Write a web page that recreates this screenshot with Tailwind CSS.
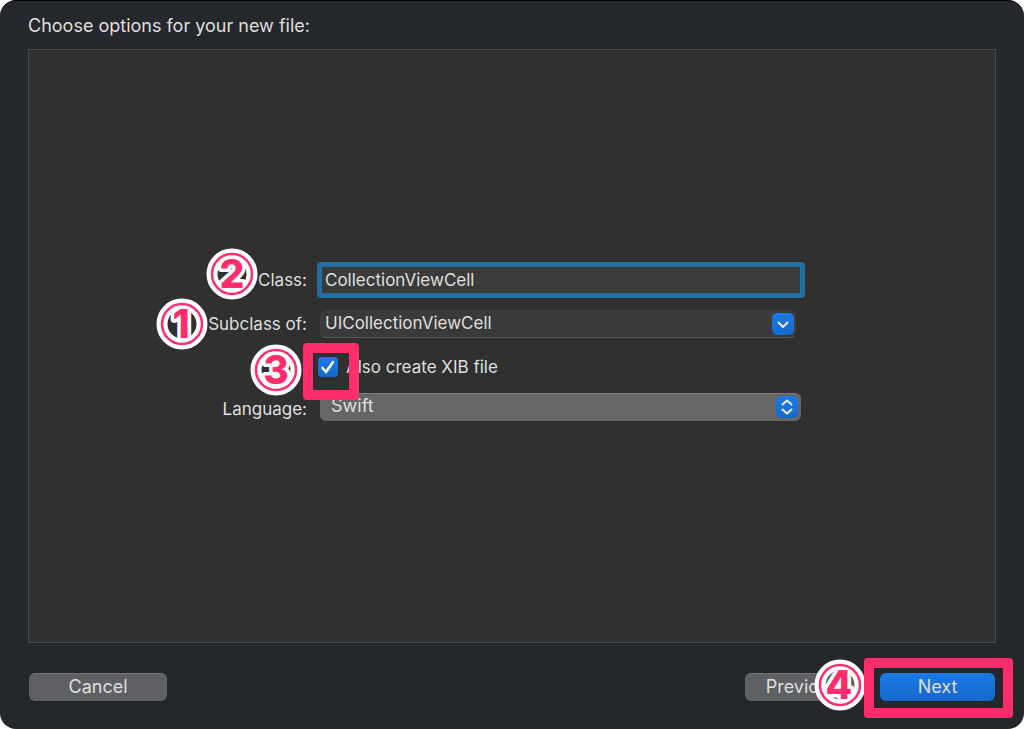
<!DOCTYPE html>
<html lang="en" class="h-full">
<head>
<meta charset="utf-8">
<title>Choose options for your new file</title>
<script src="https://cdn.jsdelivr.net/npm/@tailwindcss/browser@4"></script>
</head>
<body class="min-h-full h-full bg-white font-[Inter,sans-serif] text-[17px] leading-6 text-[#dfdfdf]">
<svg class="hidden">
  <symbol id="halo" viewBox="0 0 52 52">
    <circle cx="26" cy="26" r="20" fill="none" stroke="#fff" stroke-width="11"/>
  </symbol>
  <symbol id="ring" viewBox="0 0 52 52">
    <circle cx="26" cy="26" r="20" fill="none" stroke="#ff2d6c" stroke-width="2.5"/>
  </symbol>
</svg>
<main class="flex h-full min-h-full flex-col rounded-2xl border-t border-black bg-[#24272b] px-7 pt-[13px] pb-7">
  <h1 class="mb-[11px] text-lg leading-6">Choose options for your new file:</h1>
  <form id="options" class="flex flex-1 flex-col justify-center border border-[#464748] bg-[#303030] pb-[9px]">
    <div class="grid grid-cols-[278fr_488fr_180fr] gap-x-[10px]">
      <div class="relative flex items-center justify-end">
        <label for="cls">Class:</label>
        <svg class="absolute -top-[14px] right-[49px] size-[52px]" viewBox="0 0 52 52" aria-hidden="true"><use href="#halo"/><text x="26" y="40" text-anchor="middle" font-family="Inter" font-weight="800" font-size="39" fill="#ff2d6c" stroke="#fff" stroke-width="7" stroke-linejoin="round" paint-order="stroke">2</text><use href="#ring"/></svg>
      </div>
      <input id="cls" type="text" value="CollectionViewCell" class="h-9 w-full rounded-sm border-[5px] border-[#226e9e] bg-[#3b3b3b] px-[3px] outline-none">
    </div>
    <div class="mt-3 grid grid-cols-[278fr_488fr_180fr] gap-x-[10px]">
      <div class="relative flex items-center justify-end">
        <label for="sub">Subclass of:</label>
        <svg class="absolute -top-3 right-[99px] size-[52px]" viewBox="0 0 52 52" aria-hidden="true"><use href="#halo"/><text x="25" y="40" text-anchor="middle" font-family="Inter" font-weight="800" font-size="39" fill="#ff2d6c" stroke="#fff" stroke-width="7" stroke-linejoin="round" paint-order="stroke">1</text><use href="#ring"/></svg>
      </div>
      <div class="mr-[9px] ml-[3px] flex h-7 items-center rounded-md border border-[#3d3d3d] border-b-[#5a5a5a] bg-[#3a3a3a] pr-px pl-1">
        <input id="sub" type="text" value="UICollectionViewCell" class="min-w-0 flex-1 bg-transparent pb-[2px] outline-none">
        <button type="button" aria-label="Show classes" class="flex size-[22px] items-center justify-center rounded-[5px] bg-linear-to-b from-[#1b7ae6] to-[#1668cb]">
          <svg class="size-[22px]" viewBox="0 0 22 22" fill="none" stroke="#e8f1fc" stroke-width="2" stroke-linecap="round" stroke-linejoin="round"><path d="M6.500 9.500l4.500 4.500 4.500-4.500"/></svg>
        </button>
      </div>
    </div>
    <div class="mt-[17px] grid grid-cols-[278fr_488fr_180fr] gap-x-[10px]">
      <div class="relative">
        <svg class="absolute -top-[11px] right-[5px] size-[52px]" viewBox="0 0 52 52" aria-hidden="true"><use href="#halo"/><text x="26" y="40" text-anchor="middle" font-family="Inter" font-weight="800" font-size="39" fill="#ff2d6c" stroke="#fff" stroke-width="7" stroke-linejoin="round" paint-order="stroke">3</text><use href="#ring"/></svg>
      </div>
      <div class="relative flex items-center">
        <span class="relative ml-px flex size-5">
          <input id="xib" type="checkbox" checked class="size-5 appearance-none rounded-[4px] bg-linear-to-b from-[#1b7ae6] to-[#1668cb]">
          <svg class="pointer-events-none absolute inset-0 size-5" viewBox="0 0 20 20" fill="none" stroke="#fff" stroke-width="2.600" stroke-linecap="round" stroke-linejoin="round"><path d="M4.500 11l3.500 4 7-10"/></svg>
        </span>
        <label for="xib" class="ml-2">Also create XIB file</label>
        <span class="absolute -top-3 -left-[14px] z-10 h-[57px] w-14 rounded-[4px] border-10 border-[#ff2d6c]"></span>
      </div>
    </div>
    <div class="mt-[14px] grid grid-cols-[278fr_488fr_180fr] gap-x-[10px]">
      <div class="flex items-center justify-end pt-1"><label for="lang">Language:</label></div>
      <div class="relative mr-1 ml-[3px] flex">
        <select id="lang" class="h-7 w-full appearance-none rounded-md border-t border-[#7a7a7a] bg-[#666666] pr-8 pb-[3px] pl-[11px] text-lg leading-6 outline-none"><option>Swift</option></select>
        <span class="pointer-events-none absolute top-[3px] right-[3px] size-[22px] rounded-[5px] bg-linear-to-b from-[#1b7ae6] to-[#1668cb]">
          <svg class="size-[22px]" viewBox="0 0 22 22" fill="none" stroke="#e8f1fc" stroke-width="2" stroke-linecap="round" stroke-linejoin="round"><path d="M6.500 8.500l4.500-4 4.500 4M6.500 13.500l4.500 4 4.500-4"/></svg>
        </span>
      </div>
    </div>
  </form>
  <footer class="mt-[30px] flex justify-between px-px text-lg leading-6">
    <button type="button" class="h-7 w-[138px] rounded-md border-t border-[#727377] bg-[#5f6064] pb-px">Cancel</button>
    <div class="flex gap-5">
      <div class="relative flex">
        <button type="button" class="h-7 w-[115px] rounded-md border-t border-[#727377] bg-[#5f6064] pb-px">Previous</button>
        <svg class="absolute -top-[14px] -right-[6px] size-[52px]" viewBox="0 0 52 52" aria-hidden="true"><use href="#halo"/><text x="25" y="40" text-anchor="middle" font-family="Inter" font-weight="800" font-size="39" fill="#ff2d6c" stroke="#fff" stroke-width="7" stroke-linejoin="round" paint-order="stroke">4</text><use href="#ring"/></svg>
      </div>
      <div class="relative flex">
        <button form="options" type="button" class="h-7 w-[115px] rounded-md bg-linear-to-b from-[#1b7ae6] to-[#1668cb]">Next</button>
        <span class="absolute -top-[15px] -right-[18px] -bottom-[17px] -left-4 rounded-[4px] border-10 border-[#ff2d6c]"></span>
      </div>
    </div>
  </footer>
</main>
</body>
</html>
